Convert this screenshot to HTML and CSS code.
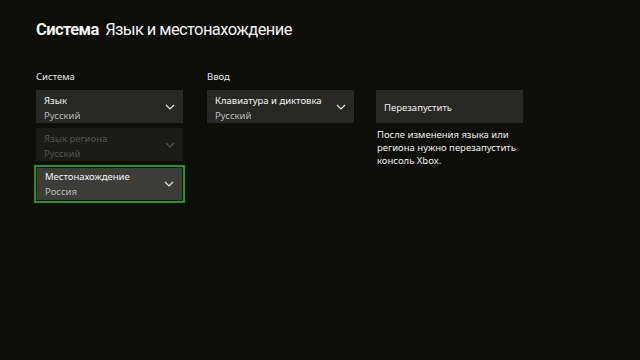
FILE: index.html
```html
<!DOCTYPE html>
<html>
<head>
    <meta charset="utf-8" />
    <title>Язык и местонахождение</title>
    <link rel="stylesheet" href="styles.css">
</head>
<body>
    <div class="page">
      <!-- заголовок -->
      <h1 class="head"><b>Система</b> Язык и местонахождение</h1>

      <div class="cols">
        <!-- колонка: система -->
        <div class="col">
          <div class="col_title">Система</div>
          <div class="pick">
            <div class="pick_txt">
              <div class="pick_name">Язык</div>
              <div class="pick_val">Русский</div>
            </div>
            <svg class="arrow" width="10" height="6" viewBox="0 0 10 6"><path d="M1 1 L5 5 L9 1" fill="none" stroke="currentColor" stroke-width="1.2"/></svg>
          </div>
          <div class="pick off">
            <div class="pick_txt">
              <div class="pick_name">Язык региона</div>
              <div class="pick_val">Русский</div>
            </div>
            <svg class="arrow" width="10" height="6" viewBox="0 0 10 6"><path d="M1 1 L5 5 L9 1" fill="none" stroke="currentColor" stroke-width="1.2"/></svg>
          </div>
          <div class="pick focus">
            <div class="pick_txt">
              <div class="pick_name">Местонахождение</div>
              <div class="pick_val">Россия</div>
            </div>
            <svg class="arrow" width="10" height="6" viewBox="0 0 10 6"><path d="M1 1 L5 5 L9 1" fill="none" stroke="currentColor" stroke-width="1.2"/></svg>
          </div>
        </div>

        <!-- колонка: ввод -->
        <div class="col">
          <div class="col_title">Ввод</div>
          <div class="pick">
            <div class="pick_txt">
              <div class="pick_name">Клавиатура и диктовка</div>
              <div class="pick_val">Русский</div>
            </div>
            <svg class="arrow" width="10" height="6" viewBox="0 0 10 6"><path d="M1 1 L5 5 L9 1" fill="none" stroke="currentColor" stroke-width="1.2"/></svg>
          </div>
        </div>

        <!-- колонка: перезапуск -->
        <div class="col col3">
          <div class="col_title">&nbsp;</div>
          <div class="btn">Перезапустить</div>
          <p class="note">После изменения языка или региона нужно перезапустить консоль Xbox.</p>
        </div>
      </div>
    </div>
</body>
</html>
```

FILE: styles.css
```css
* {
  margin: 0;
  padding: 0;
  box-sizing: border-box;
}
html, body {
  height: 100%;
}
body {
  background-color: #0d0d0a;
  color: #fff;
  font-family: "Noto Sans", "Open Sans", sans-serif;
}
.page {
  padding: 18px 0 0 36px;
}
/* заголовок */
.head {
  font-family: Roboto, "Noto Sans", sans-serif;
  font-size: 16.5px;
  font-weight: normal;
  color: #f2f2f2;
  line-height: 24px;
  letter-spacing: -0.6px;
}
.head b {
  font-weight: bold;
  margin-right: 3px;
}
.cols {
  display: flex;
  margin-top: 28px;
}
.col {
  width: 147px;
  margin-right: 24px;
  display: flex;
  flex-direction: column;
  gap: 5px;
}
.col3 {
  margin-left: -2px;
}
.col_title {
  font-size: 9.5px;
  color: #e6e6e6;
  line-height: 14px;
  margin-bottom: 1px;
}
/* выпадающий список */
.pick {
  height: 33px;
  background-color: #272723;
  display: flex;
  align-items: center;
  padding: 3px 8px 0 8px;
}
.pick_txt {
  flex: 1;
}
.pick_name {
  font-size: 9.5px;
  line-height: 14px;
  color: #f5f5f5;
}
.pick_val {
  font-size: 9.5px;
  line-height: 15px;
  color: #bcbcbc;
}
.arrow {
  color: #e8e8e8;
  margin-top: -2px;
}
.off {
  background-color: #1b1b18;
}
.off .pick_name, .off .pick_val, .off .arrow {
  color: #55554f;
}
.focus {
  height: 38px;
  margin: -1px -2px 0;
  background-color: #3c3c39;
  border: 2px solid #1e9b1e;
  box-shadow: inset 0 0 0 1px #10100d;
  padding: 1px 9px 0 9px;
}
.btn {
  height: 33px;
  background-color: #272723;
  display: flex;
  align-items: center;
  padding: 2px 0 0 8px;
  font-size: 9.5px;
  color: #f0f0f0;
}
.note {
  font-size: 9.5px;
  line-height: 13px;
  color: #f0f0f0;
  margin-top: 0;
  padding-left: 1px;
}
```
